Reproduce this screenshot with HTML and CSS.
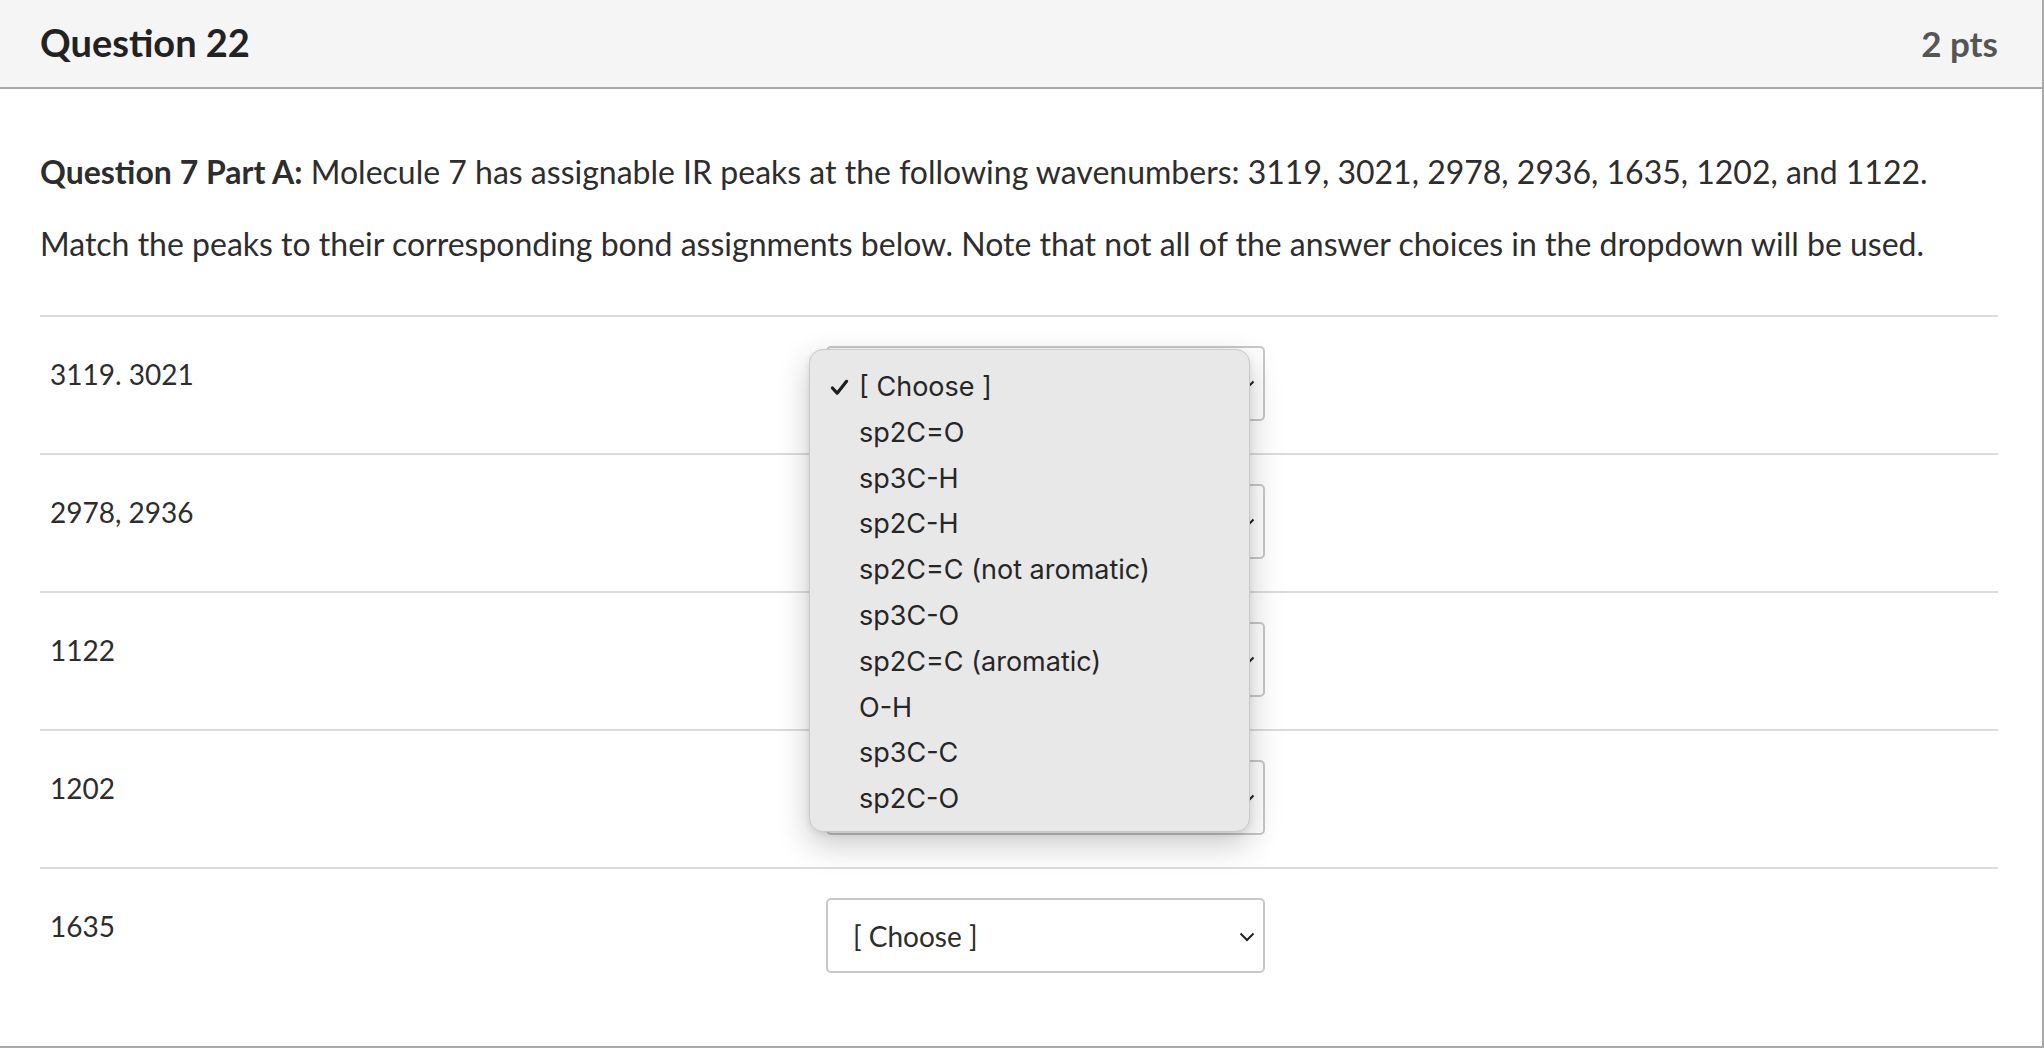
FILE: index.html
```html
<!DOCTYPE html>
<html lang="en">
<head>
  <meta charset="UTF-8">
  <title>Question 22</title>
  <link rel="stylesheet" href="styles.css">
</head>
<body>
  <div class="question">
    <div class="question-header">
      <h2 class="question-title">Question 22</h2>
      <div class="points">2 pts</div>
    </div>

    <div class="question-body">
      <p><strong>Question 7 Part A:</strong> Molecule 7 has assignable IR peaks at the following wavenumbers: 3119, 3021, 2978, 2936, 1635, 1202, and 1122.</p>
      <p>Match the peaks to their corresponding bond assignments below. Note that not all of the answer choices in the dropdown will be used.</p>

      <div class="answers">
        <div class="answer-row">
          <div class="answer-label">3119. 3021</div>
          <div class="answer-select">
            <div class="select">
              <span>[ Choose ]</span>
              <svg class="chevron" viewBox="0 0 16 10"><path d="M1.5 1.5 L8 8 L14.5 1.5"/></svg>
            </div>

            <!-- open dropdown menu -->
            <ul class="menu">
              <li class="selected">
                <svg class="check" viewBox="0 0 20 18"><path d="M2.5 9.5 L7.5 15 L17.5 2.5"/></svg>
                [ Choose ]
              </li>
              <li>sp2C=O</li>
              <li>sp3C-H</li>
              <li>sp2C-H</li>
              <li>sp2C=C (not aromatic)</li>
              <li>sp3C-O</li>
              <li>sp2C=C (aromatic)</li>
              <li>O-H</li>
              <li>sp3C-C</li>
              <li>sp2C-O</li>
            </ul>
          </div>
        </div>

        <div class="answer-row">
          <div class="answer-label">2978, 2936</div>
          <div class="answer-select">
            <div class="select">
              <span>[ Choose ]</span>
              <svg class="chevron" viewBox="0 0 16 10"><path d="M1.5 1.5 L8 8 L14.5 1.5"/></svg>
            </div>
          </div>
        </div>

        <div class="answer-row">
          <div class="answer-label">1122</div>
          <div class="answer-select">
            <div class="select">
              <span>[ Choose ]</span>
              <svg class="chevron" viewBox="0 0 16 10"><path d="M1.5 1.5 L8 8 L14.5 1.5"/></svg>
            </div>
          </div>
        </div>

        <div class="answer-row">
          <div class="answer-label">1202</div>
          <div class="answer-select">
            <div class="select">
              <span>[ Choose ]</span>
              <svg class="chevron" viewBox="0 0 16 10"><path d="M1.5 1.5 L8 8 L14.5 1.5"/></svg>
            </div>
          </div>
        </div>

        <div class="answer-row">
          <div class="answer-label">1635</div>
          <div class="answer-select">
            <div class="select">
              <span>[ Choose ]</span>
              <svg class="chevron" viewBox="0 0 16 10"><path d="M1.5 1.5 L8 8 L14.5 1.5"/></svg>
            </div>
          </div>
        </div>
      </div>
    </div>
  </div>
</body>
</html>
```

FILE: styles.css
```css
:root {
  --text: #2d2d2d;
  --muted: #555555;
  --header-bg: #f5f5f5;
  --frame: #a9a9a9;
  --rule: #dcdcdc;
}

body {
  margin: 0;
  font-family: 'Lato', 'Open Sans', sans-serif;
  color: var(--text);
  background: #ffffff;
}

.question {
  width: 2042px;
  height: 1046px;
  border-right: 2px solid var(--frame);
  border-bottom: 2px solid var(--frame);
  overflow: hidden;
}

.question-header {
  height: 87px;
  background: var(--header-bg);
  border-bottom: 2px solid var(--frame);
  display: flex;
  align-items: center;
  justify-content: space-between;
  padding: 0 44px 0 40px;
}

.question-title {
  margin: 0 0 4px;
  font-size: 38px;
  font-weight: 700;
  color: #222222;
}

.points {
  margin-bottom: 2px;
  font-size: 35px;
  font-weight: 700;
  color: var(--muted);
}

.question-body {
  padding: 0 44px 0 40px;
}

.question-body p {
  margin: 0;
  font-size: 32px;
  line-height: 40px;
}

.question-body p:first-child {
  padding-top: 63px;
}

.question-body p + p {
  margin-top: 32px;
}

.answers {
  margin-top: 51px;
}

.answer-row {
  display: grid;
  grid-template-columns: 786px 1fr;
  border-top: 2px solid var(--rule);
  height: 136px;
}

.answer-label {
  padding: 38px 0 0 10px;
  font-size: 28px;
  line-height: 38px;
}

.answer-select {
  position: relative;
  padding-top: 29px;
}

.select {
  width: 439px;
  height: 75px;
  box-sizing: border-box;
  border: 2px solid #c8c8c8;
  border-radius: 5px;
  display: flex;
  align-items: center;
  justify-content: space-between;
  padding: 0 8px 0 25px;
  font-size: 28px;
  background: #ffffff;
}

.chevron {
  width: 16px;
  height: 10px;
  fill: none;
  stroke: #222222;
  stroke-width: 2;
  margin-top: 2px;
}

/* open dropdown */
.menu {
  position: absolute;
  z-index: 10;
  left: -17px;
  top: 32px;
  width: 441px;
  height: 483px;
  box-sizing: border-box;
  margin: 0;
  padding: 14px 0 10px;
  list-style: none;
  background: #e8e8e8;
  border: 1px solid #c9c9c9;
  border-radius: 14px;
  box-shadow: 0 12px 32px rgba(0, 0, 0, 0.22), 0 2px 6px rgba(0, 0, 0, 0.08);
  font-family: 'Inter', 'Noto Sans', sans-serif;
  font-size: 27px;
  color: #262626;
}

.menu li {
  height: 45.8px;
  line-height: 45.8px;
  padding-left: 49px;
  position: relative;
  white-space: nowrap;
}

.check {
  position: absolute;
  left: 20px;
  top: 15px;
  width: 19px;
  height: 17px;
  fill: none;
  stroke: #1e1e1e;
  stroke-width: 3.4;
  stroke-linecap: round;
  stroke-linejoin: round;
}
```
